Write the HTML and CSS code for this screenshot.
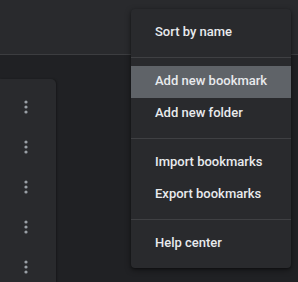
FILE: index.html
```html
<!DOCTYPE html>
<html lang="en">
<head>
  <meta charset="UTF-8" />
  <title>Bookmarks</title>
  <link rel="stylesheet" href="styles.css">
</head>
<body>
  <div class="toolbar"></div>
  <div class="main">
    <div class="card">
      <div class="row"><svg class="more" width="4" height="14" viewBox="0 0 4 14"><circle cx="2" cy="2" r="1.6"/><circle cx="2" cy="7" r="1.6"/><circle cx="2" cy="12" r="1.6"/></svg></div>
      <div class="row"><svg class="more" width="4" height="14" viewBox="0 0 4 14"><circle cx="2" cy="2" r="1.6"/><circle cx="2" cy="7" r="1.6"/><circle cx="2" cy="12" r="1.6"/></svg></div>
      <div class="row"><svg class="more" width="4" height="14" viewBox="0 0 4 14"><circle cx="2" cy="2" r="1.6"/><circle cx="2" cy="7" r="1.6"/><circle cx="2" cy="12" r="1.6"/></svg></div>
      <div class="row"><svg class="more" width="4" height="14" viewBox="0 0 4 14"><circle cx="2" cy="2" r="1.6"/><circle cx="2" cy="7" r="1.6"/><circle cx="2" cy="12" r="1.6"/></svg></div>
      <div class="row"><svg class="more" width="4" height="14" viewBox="0 0 4 14"><circle cx="2" cy="2" r="1.6"/><circle cx="2" cy="7" r="1.6"/><circle cx="2" cy="12" r="1.6"/></svg></div>
    </div>
  </div>

  <div class="menu">
    <div class="item">Sort by name</div>
    <hr>
    <div class="item active">Add new bookmark</div>
    <div class="item">Add new folder</div>
    <hr>
    <div class="item">Import bookmarks</div>
    <div class="item">Export bookmarks</div>
    <hr>
    <div class="item">Help center</div>
  </div>
</body>
</html>
```

FILE: styles.css
```css
body {
  margin: 0;
  background: #202124;
  font-family: Roboto, "Liberation Sans", sans-serif;
  color: #e8eaed;
  overflow: hidden;
}

.toolbar {
  height: 54px;
  background: #292a2d;
  border-bottom: 1px solid #3c3d40;
}

.main {
  padding-top: 24px;
}

.card {
  width: 56px;
  background: #292a2d;
  border-top-right-radius: 5px;
  box-shadow: 1px 0 2px rgba(0, 0, 0, 0.3);
  padding-top: 8px;
}

.row {
  height: 40px;
  display: flex;
  align-items: center;
  padding-left: 24px;
}

.more {
  fill: #9aa0a6;
}

.menu {
  position: absolute;
  left: 131px;
  top: 9px;
  width: 160px;
  background: #292a2d;
  border-radius: 4px;
  padding: 8px 0;
  box-shadow: 0 2px 6px rgba(0, 0, 0, 0.45), 0 1px 2px rgba(0, 0, 0, 0.3);
}

.item {
  height: 30px;
  line-height: 30px;
  padding: 0 0 2px 24px;
  font-size: 13px;
  font-weight: 500;
  white-space: nowrap;
}

.item.active {
  background: #5f6368;
}

.menu hr {
  border: none;
  border-top: 1px solid #3f4043;
  margin: 8px 0;
}
```
